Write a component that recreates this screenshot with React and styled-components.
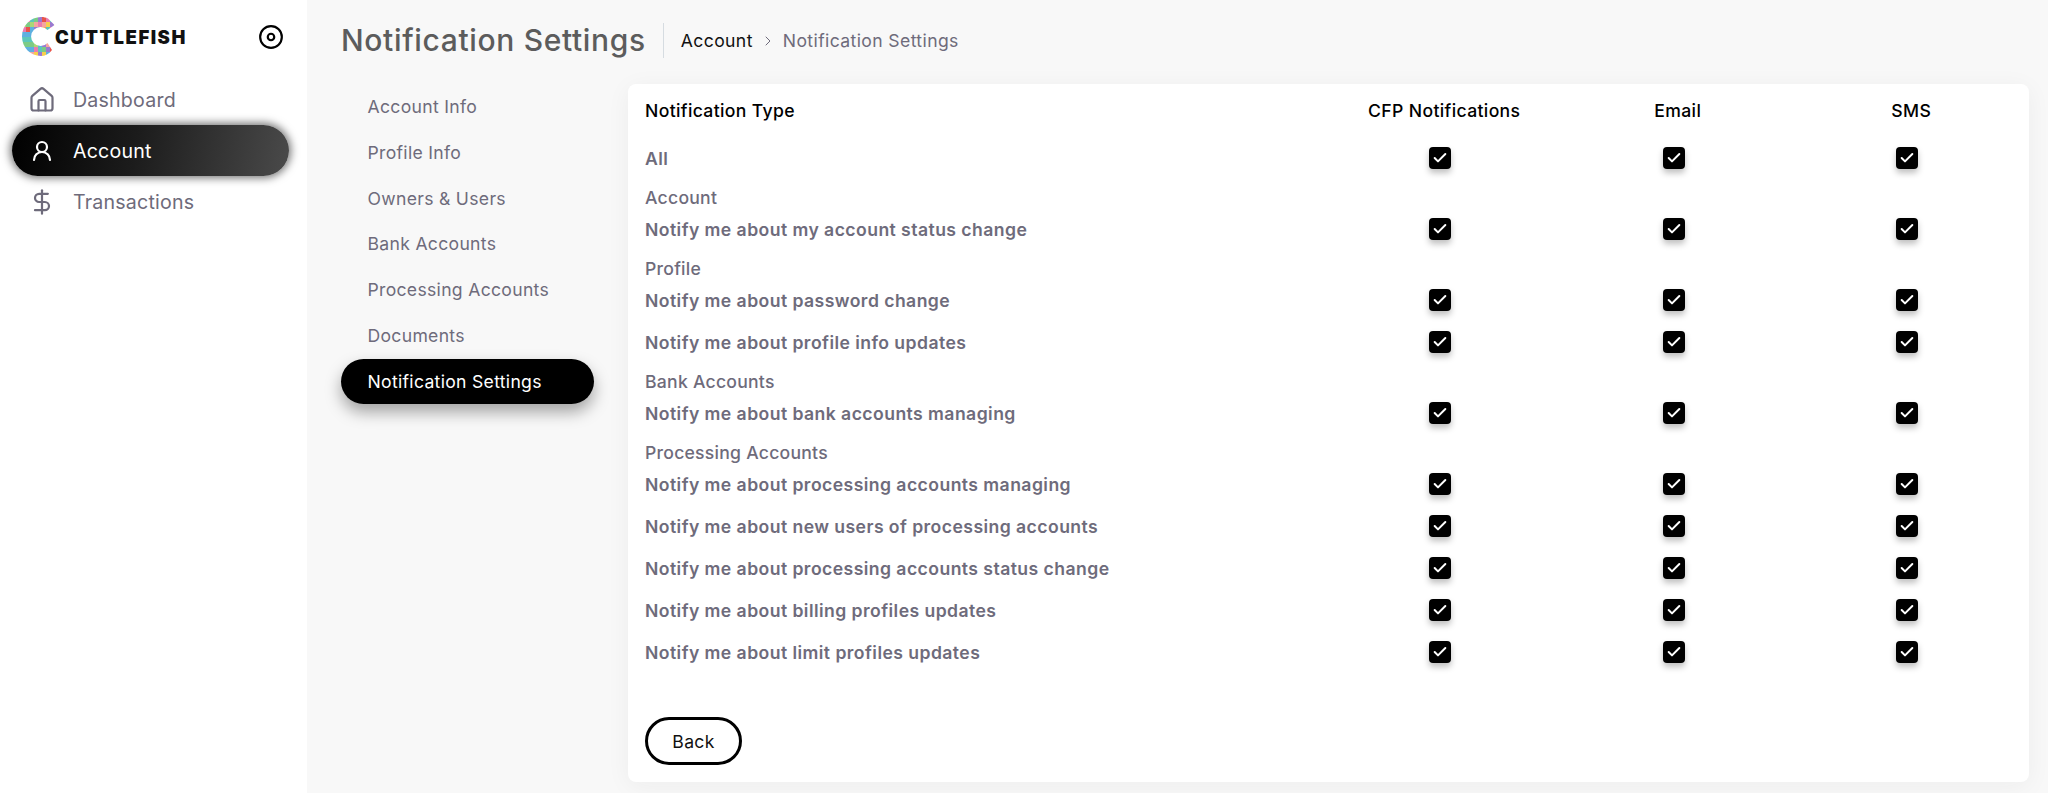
import React from "react";
import styled, { createGlobalStyle } from "styled-components";
import { House, UserRound, DollarSign, Check, ChevronRight } from "lucide-react";

const Global = createGlobalStyle`
  html, body { margin: 0; padding: 0; height: 100%; overflow: hidden; }
  body { font-family: "Inter", "Liberation Sans", sans-serif; background: #f8f8f8; }
  * { box-sizing: border-box; }
`;

const Page = styled.div`
  display: flex;
  width: 2048px;
  height: 793px;
`;
const Sidebar = styled.aside`
  flex: 0 0 307px;
  background: #fff;
  padding: 0 18px 0 12px;
`;
const Brand = styled.div`
  height: 74px;
  display: flex;
  align-items: center;
  justify-content: space-between;
  padding: 0 5px 0 10px;
`;
const Logo = styled.div`
  display: flex;
  align-items: center;
`;
const LogoWord = styled.span`
  font-weight: 900;
  font-size: 18.5px;
  letter-spacing: 1.5px;
  color: #111;
  margin-left: 0;
`;
const NavItem = styled.div`
  display: flex;
  align-items: center;
  height: 51px;
  padding-left: 16px;
  gap: 17px;
  font-size: 19.6px;
  letter-spacing: 0.2px;
  border-radius: 26px;
  color: ${(p) => (p.$active ? "#fff" : "#6e6b7b")};
  background: ${(p) => (p.$active ? "linear-gradient(100deg, #000 0%, #1c1c1c 45%, #4a4a4a 100%)" : "transparent")};
  box-shadow: ${(p) => (p.$active ? "0 0 8px 2px rgba(0,0,0,.55)" : "none")};
`;
const NavIcon = styled.span`
  flex: 0 0 28px;
  height: 28px;
  display: flex;
  align-items: center;
  justify-content: center;
`;
const Main = styled.main`
  flex: 1;
  padding: 0 19px 0 34px;
`;
const Header = styled.header`
  height: 84px;
  display: flex;
  align-items: center;
  padding-bottom: 3px;
`;
const Title = styled.h1`
  margin: 0;
  font-size: 30px;
  font-weight: 500;
  letter-spacing: 0.65px;
  color: #5c5c5c;
  padding: 0 17px 0 0;
  line-height: 35px;
  height: 35px;
  border-right: 1px solid #d6dce1;
`;
const Crumbs = styled.div`
  display: flex;
  align-items: center;
  padding-left: 17px;
  font-size: 17.6px;
  letter-spacing: 0.38px;
  color: #6e6b7b;
`;
const CrumbHome = styled.span`
  color: #111;
`;
const CrumbSep = styled.span`
  display: flex;
  margin: 0 7px;
  color: #6e6b7b;
`;
const Content = styled.div`
  display: flex;
  gap: 34px;
  align-items: flex-start;
`;
const SubNav = styled.nav`
  flex: 0 0 253px;
  display: flex;
  flex-direction: column;
  gap: 0.8px;
`;
const SubItem = styled.div`
  height: 45px;
  display: flex;
  align-items: center;
  padding-left: 26.5px;
  font-size: 17.6px;
  letter-spacing: 0.3px;
  border-radius: 23px;
  color: ${(p) => (p.$active ? "#fff" : "#6e6b7b")};
  background: ${(p) => (p.$active ? "#000" : "transparent")};
  box-shadow: ${(p) => (p.$active ? "0 8px 16px rgba(0,0,0,.35)" : "none")};
`;
const Card = styled.section`
  flex: 1;
  height: 698px;
  background: #fff;
  border-radius: 8px;
  box-shadow: 0 4px 24px rgba(34, 41, 47, 0.05);
  padding: 0 5px 17px 17px;
  display: flex;
  flex-direction: column;
`;
const Grid = styled.div`
  display: grid;
  grid-template-columns: 1fr repeat(3, 233.5px);
`;
const HeadCell = styled.div`
  height: 53px;
  display: flex;
  align-items: center;
  justify-content: ${(p) => (p.$center ? "center" : "flex-start")};
  padding-left: ${(p) => (p.$center ? "8px" : "0")};
  font-size: 17.6px;
  font-weight: 500;
  letter-spacing: 0.36px;
  color: #000;
`;
const GroupLabel = styled.div`
  grid-column: 1 / -1;
  height: 29px;
  padding-top: 8px;
  font-size: 17.6px;
  letter-spacing: 0.25px;
  line-height: 21px;
  font-weight: 500;
  color: #6e6b7b;
`;
const RowLabel = styled.div`
  height: 42px;
  display: flex;
  align-items: center;
  font-size: 17.6px;
  font-weight: 600;
  letter-spacing: 0.44px;
  color: #6e6b7b;
`;
const CheckCell = styled.div`
  height: 42px;
  display: flex;
  align-items: center;
  justify-content: center;
`;
const CheckBox = styled.span`
  width: 22px;
  height: 22px;
  border-radius: 4px;
  background: #000;
  color: #fff;
  display: flex;
  align-items: center;
  justify-content: center;
  box-shadow: 0 4px 6px rgba(0, 0, 0, 0.25);
`;
const Back = styled.button`
  margin-top: auto;
  align-self: flex-start;
  width: 97px;
  height: 48px;
  border: 3px solid #000;
  border-radius: 24px;
  background: #fff;
  color: #111;
  font-family: inherit;
  font-size: 17.6px;
  letter-spacing: 0.3px;
  cursor: pointer;
`;

const palette = ["#e8534a", "#f7cf4d", "#7ccb86", "#5eb0e0", "#ea7bb0", "#f59a4a", "#9a7ad0", "#a9d877", "#5cc7ba", "#f4a6a0"];
const tiles = [];
for (let x = 0; x < 9; x++) {
  for (let y = 0; y < 9; y++) {
    const c = x < 3 && y > 2 && y < 7 ? palette[[3, 8, 2, 3][y - 3]] : palette[(x * 4 + y * 7 + ((x * y) % 3)) % palette.length];
    tiles.push({ x: x * 4, y: y * 5, c });
  }
}

const LogoMark = () => (
  <svg width="33" height="40" viewBox="0 0 33 40" style={{ flex: "0 0 33px" }}>
    <defs>
      <clipPath id="cshape">
        <path d="M19 0 C22 0 24 .5 26 1.5 L32.5 8 L25.5 13 A9.5 9.5 0 1 0 25.5 26 L30 33 C27 37 23 39 19 39 C8.5 39 0 30.5 0 19.5 C0 8.5 8.5 0 19 0 Z" />
      </clipPath>
    </defs>
    <g clipPath="url(#cshape)">
      {tiles.map((t, i) => (
        <rect key={i} x={t.x} y={t.y} width="4" height="5" fill={t.c} />
      ))}
    </g>
  </svg>
);

const TargetIcon = () => (
  <svg width="26" height="26" viewBox="0 0 24 24" fill="none" stroke="#000" strokeWidth="2">
    <circle cx="12" cy="12" r="10" />
    <circle cx="12" cy="12" r="3" />
  </svg>
);

const TYPES = [
  { label: "All" },
  { group: "Account" },
  { label: "Notify me about my account status change" },
  { group: "Profile" },
  { label: "Notify me about password change" },
  { label: "Notify me about profile info updates" },
  { group: "Bank Accounts" },
  { label: "Notify me about bank accounts managing" },
  { group: "Processing Accounts" },
  { label: "Notify me about processing accounts managing" },
  { label: "Notify me about new users of processing accounts" },
  { label: "Notify me about processing accounts status change" },
  { label: "Notify me about billing profiles updates" },
  { label: "Notify me about limit profiles updates" },
];

const Tick = () => (
  <CheckCell>
    <CheckBox>
      <Check size={16} strokeWidth={3} />
    </CheckBox>
  </CheckCell>
);

const SUB = ["Account Info", "Profile Info", "Owners & Users", "Bank Accounts", "Processing Accounts", "Documents", "Notification Settings"];

export default function App() {
  return (
    <Page>
      <Global />
      <Sidebar>
        <Brand>
          <Logo>
            <LogoMark />
            <LogoWord>CUTTLEFISH</LogoWord>
          </Logo>
          <TargetIcon />
        </Brand>
        <NavItem>
          <NavIcon>
            <House size={28} strokeWidth={1.9} />
          </NavIcon>
          Dashboard
        </NavItem>
        <NavItem $active>
          <NavIcon>
            <UserRound size={24} strokeWidth={2.2} />
          </NavIcon>
          Account
        </NavItem>
        <NavItem>
          <NavIcon>
            <DollarSign size={28} strokeWidth={1.9} />
          </NavIcon>
          Transactions
        </NavItem>
      </Sidebar>
      <Main>
        <Header>
          <Title>Notification Settings</Title>
          <Crumbs>
            <CrumbHome>Account</CrumbHome>
            <CrumbSep>
              <ChevronRight size={16} strokeWidth={1.5} />
            </CrumbSep>
            Notification Settings
          </Crumbs>
        </Header>
        <Content>
          <SubNav>
            {SUB.map((s) => (
              <SubItem key={s} $active={s === "Notification Settings"}>
                {s}
              </SubItem>
            ))}
          </SubNav>
          <Card>
            <Grid>
              <HeadCell>Notification Type</HeadCell>
              <HeadCell $center>CFP Notifications</HeadCell>
              <HeadCell $center>Email</HeadCell>
              <HeadCell $center>SMS</HeadCell>
              {TYPES.map((t, i) =>
                t.group ? (
                  <GroupLabel key={i}>{t.group}</GroupLabel>
                ) : (
                  <React.Fragment key={i}>
                    <RowLabel>{t.label}</RowLabel>
                    <Tick />
                    <Tick />
                    <Tick />
                  </React.Fragment>
                )
              )}
            </Grid>
            <Back>Back</Back>
          </Card>
        </Content>
      </Main>
    </Page>
  );
}
